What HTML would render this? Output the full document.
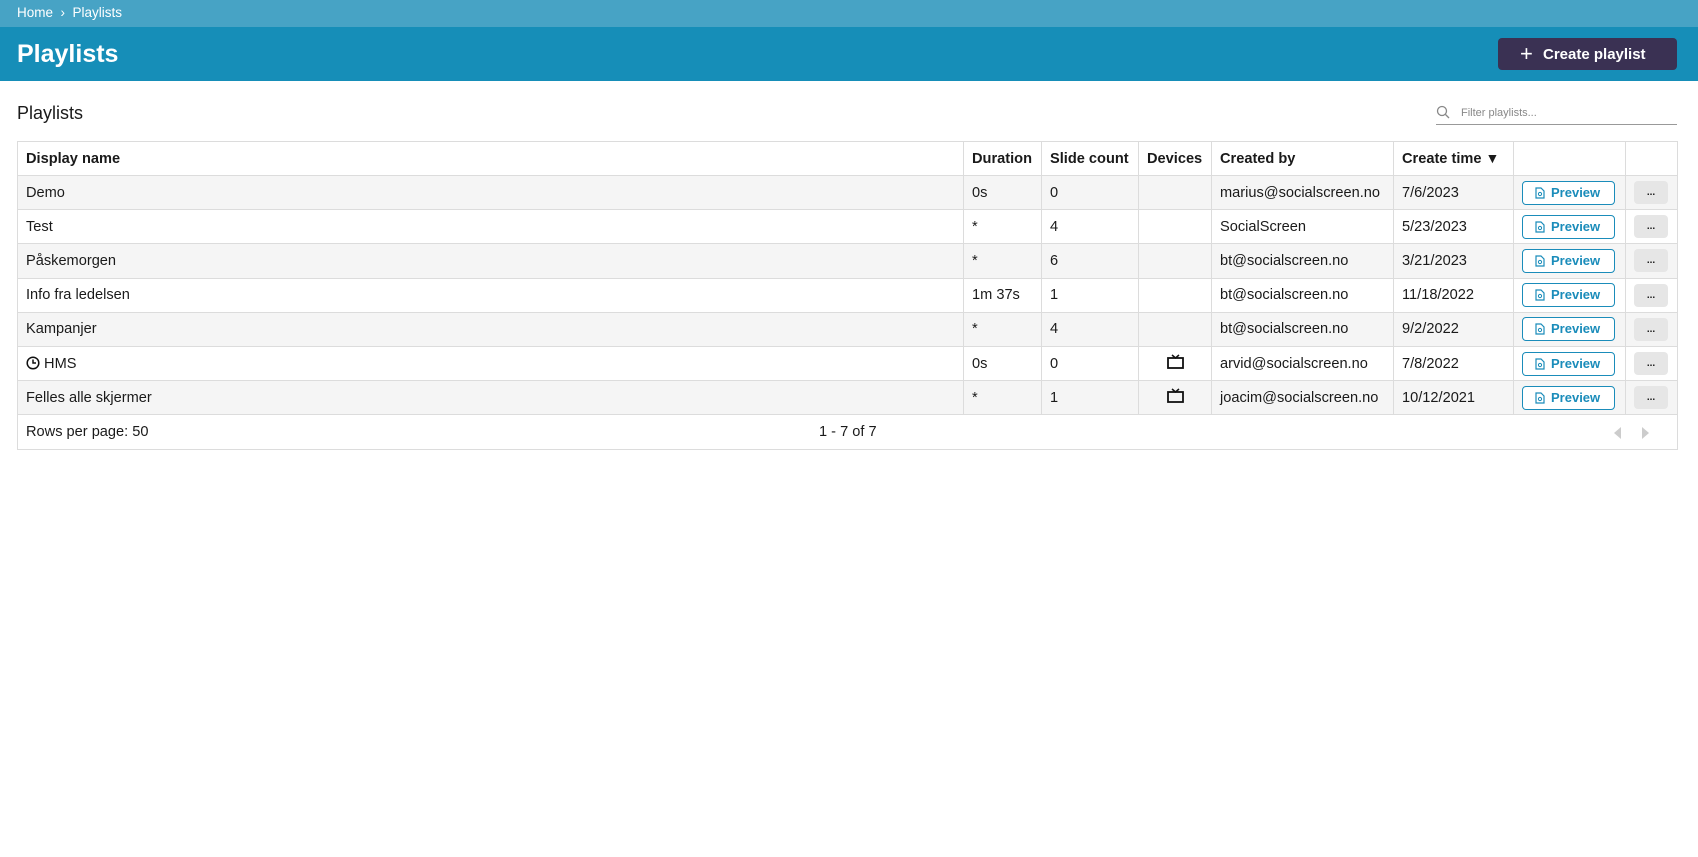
<!DOCTYPE html>
<html><head><meta charset="utf-8"><style>
*{box-sizing:border-box;margin:0;padding:0}
body{width:1698px;height:857px;background:#fff;font-family:"Liberation Sans",sans-serif;color:#1a1a1a;position:relative;overflow:hidden}
.crumb{position:absolute;left:0;top:0;width:1698px;height:27px;background:#47a3c5;color:#fff;font-size:13.5px;line-height:25px;padding-left:17px}
.head{position:absolute;left:0;top:27px;width:1698px;height:54px;background:#168eb8}
.head h1{position:absolute;left:17px;top:13px;color:#fff;font-size:25px;font-weight:bold}
.btn{position:absolute;left:1498px;top:11px;width:179px;height:32px;background:#3a3153;border-radius:4px;color:#fff;font-weight:bold;font-size:15px;line-height:33px;padding-left:22px}
.btn b{font-weight:normal;font-size:22px;position:absolute;left:22px;top:-1px}
.btn span{position:absolute;left:45px}
h2{position:absolute;left:17px;top:103px;font-size:18px;font-weight:normal}
.filter{position:absolute;left:1436px;top:101px;width:241px;height:24px;border-bottom:1px solid #999;font-size:11px;color:#888;line-height:24px;padding-left:25px}
table{position:absolute;left:17px;top:141px;border-collapse:collapse;table-layout:fixed;width:1660px;font-size:14.6px}
td,th{border:1px solid #dcdcdc;height:34.2px;padding:0 8px;text-align:left;white-space:nowrap;overflow:hidden}
th{font-weight:bold;height:34px}
tbody tr:nth-child(odd) td{background:#f5f5f5}
.pv{display:inline-block;width:93px;height:24px;border:1px solid #1a8cba;border-radius:4px;color:#1a8cba;font-weight:bold;font-size:13px;line-height:22px;padding-left:28px;position:relative;background:#fff;vertical-align:middle}
.pv svg{position:absolute;left:12px;top:5px}
.dt{display:inline-block;width:34px;height:23px;background:#e6e6e6;border-radius:4px;text-align:center;font-size:10px;line-height:24px;font-weight:bold;vertical-align:middle}
.foot td{background:#fff!important}
</style></head><body>
<div class="crumb">Home &nbsp;›&nbsp; Playlists</div>
<div class="head"><h1>Playlists</h1><div class="btn"><b>+</b><span>Create playlist</span></div></div>
<h2>Playlists</h2>
<div class="filter"><svg style="position:absolute;left:0;top:4px" width="15" height="15" viewBox="0 0 15 15"><circle cx="6" cy="6" r="4.5" fill="none" stroke="#888" stroke-width="1.3"/><path d="M9.5 9.5L13 13" stroke="#888" stroke-width="1.3"/></svg>Filter playlists...</div>
<table>
<colgroup><col style="width:946px"><col style="width:78px"><col style="width:97px"><col style="width:73px"><col style="width:182px"><col style="width:120px"><col style="width:112px"><col style="width:52px"></colgroup>
<thead><tr><th>Display name</th><th>Duration</th><th>Slide count</th><th>Devices</th><th>Created by</th><th>Create time <span style="font-size:14px">▼</span></th><th></th><th></th></tr></thead>
<tbody>
<tr><td>Demo</td><td>0s</td><td>0</td><td></td><td>marius@socialscreen.no</td><td>7/6/2023</td><td><span class="pv"><svg width="10" height="12" viewBox="0 0 10 12"><path d="M1 1h5l3 3v7H1z" fill="none" stroke="#1a8cba" stroke-width="1.2"/><circle cx="5" cy="7" r="1.6" fill="none" stroke="#1a8cba"/></svg>Preview</span></td><td><span class="dt">...</span></td></tr>
<tr><td>Test</td><td>*</td><td>4</td><td></td><td>SocialScreen</td><td>5/23/2023</td><td><span class="pv"><svg width="10" height="12" viewBox="0 0 10 12"><path d="M1 1h5l3 3v7H1z" fill="none" stroke="#1a8cba" stroke-width="1.2"/><circle cx="5" cy="7" r="1.6" fill="none" stroke="#1a8cba"/></svg>Preview</span></td><td><span class="dt">...</span></td></tr>
<tr><td>Påskemorgen</td><td>*</td><td>6</td><td></td><td>bt@socialscreen.no</td><td>3/21/2023</td><td><span class="pv"><svg width="10" height="12" viewBox="0 0 10 12"><path d="M1 1h5l3 3v7H1z" fill="none" stroke="#1a8cba" stroke-width="1.2"/><circle cx="5" cy="7" r="1.6" fill="none" stroke="#1a8cba"/></svg>Preview</span></td><td><span class="dt">...</span></td></tr>
<tr><td>Info fra ledelsen</td><td>1m 37s</td><td>1</td><td></td><td>bt@socialscreen.no</td><td>11/18/2022</td><td><span class="pv"><svg width="10" height="12" viewBox="0 0 10 12"><path d="M1 1h5l3 3v7H1z" fill="none" stroke="#1a8cba" stroke-width="1.2"/><circle cx="5" cy="7" r="1.6" fill="none" stroke="#1a8cba"/></svg>Preview</span></td><td><span class="dt">...</span></td></tr>
<tr><td>Kampanjer</td><td>*</td><td>4</td><td></td><td>bt@socialscreen.no</td><td>9/2/2022</td><td><span class="pv"><svg width="10" height="12" viewBox="0 0 10 12"><path d="M1 1h5l3 3v7H1z" fill="none" stroke="#1a8cba" stroke-width="1.2"/><circle cx="5" cy="7" r="1.6" fill="none" stroke="#1a8cba"/></svg>Preview</span></td><td><span class="dt">...</span></td></tr>
<tr><td><svg width="14" height="14" viewBox="0 0 14 14" style="vertical-align:-2px"><circle cx="7" cy="7" r="5.8" fill="none" stroke="#111" stroke-width="1.5"/><path d="M7 3.5V7h3" fill="none" stroke="#111" stroke-width="1.5"/></svg> HMS</td><td>0s</td><td>0</td><td style="text-align:center"><svg width="17" height="15" viewBox="0 0 17 15"><rect x="1" y="4" width="15" height="10" fill="none" stroke="#111" stroke-width="1.8"/><path d="M5 1l3.5 3L12 1" fill="none" stroke="#111" stroke-width="1.5"/></svg></td><td>arvid@socialscreen.no</td><td>7/8/2022</td><td><span class="pv"><svg width="10" height="12" viewBox="0 0 10 12"><path d="M1 1h5l3 3v7H1z" fill="none" stroke="#1a8cba" stroke-width="1.2"/><circle cx="5" cy="7" r="1.6" fill="none" stroke="#1a8cba"/></svg>Preview</span></td><td><span class="dt">...</span></td></tr>
<tr><td>Felles alle skjermer</td><td>*</td><td>1</td><td style="text-align:center"><svg width="17" height="15" viewBox="0 0 17 15"><rect x="1" y="4" width="15" height="10" fill="none" stroke="#111" stroke-width="1.8"/><path d="M5 1l3.5 3L12 1" fill="none" stroke="#111" stroke-width="1.5"/></svg></td><td>joacim@socialscreen.no</td><td>10/12/2021</td><td><span class="pv"><svg width="10" height="12" viewBox="0 0 10 12"><path d="M1 1h5l3 3v7H1z" fill="none" stroke="#1a8cba" stroke-width="1.2"/><circle cx="5" cy="7" r="1.6" fill="none" stroke="#1a8cba"/></svg>Preview</span></td><td><span class="dt">...</span></td></tr>
<tr class="foot"><td colspan="8" style="position:relative;height:35px">Rows per page: 50<span style="position:absolute;left:801px;top:9px">1 - 7 of 7</span><svg style="position:absolute;left:1593px;top:11px" width="40" height="14" viewBox="0 0 40 14"><path d="M10 1L3 7l7 6z" fill="#ccc"/><path d="M31 1l7 6-7 6z" fill="#ccc"/></svg></td></tr>
</tbody></table>
</body></html>
